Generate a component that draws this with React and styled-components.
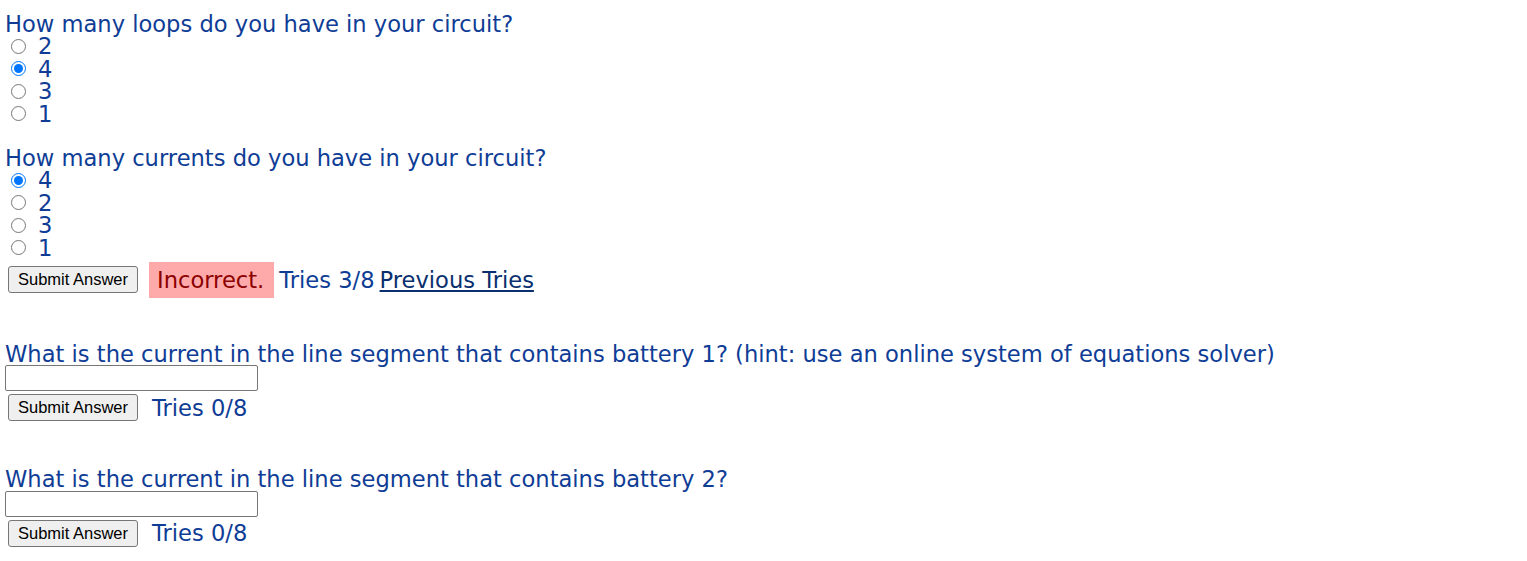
import React from 'react'
import styled, { createGlobalStyle } from "styled-components"

const GlobalStyle = createGlobalStyle`
  body {
    margin: 0;
    background: #ffffff;
    font-family: "DejaVu Sans", Verdana, sans-serif;
  }
`;

const questions = [
  { text: "How many loops do you have in your circuit?", options: ["2", "4", "3", "1"], checked: "4" },
  { text: "How many currents do you have in your circuit?", options: ["4", "2", "3", "1"], checked: "4" },
];

const App = () => {
  return (
    <Page>
      <GlobalStyle />
      <ChoiceBlock>
        <Question>{questions[0].text}</Question>
        {questions[0].options.map((o) => (
          <Option key={o}>
            <Radio type="radio" name="q1" defaultChecked={o === questions[0].checked} />
            <span>{o}</span>
          </Option>
        ))}
      </ChoiceBlock>
      <ChoiceBlock $gap>
        <Question>{questions[1].text}</Question>
        {questions[1].options.map((o) => (
          <Option key={o}>
            <Radio type="radio" name="q2" defaultChecked={o === questions[1].checked} />
            <span>{o}</span>
          </Option>
        ))}
        <SubmitRow>
          <SubmitButton>Submit Answer</SubmitButton>
          <Incorrect>Incorrect.</Incorrect>
          <Tries>Tries 3/8</Tries>
          <PrevLink href="#">Previous Tries</PrevLink>
        </SubmitRow>
      </ChoiceBlock>

      <FreeBlock $first>
        <Question>What is the current in the line segment that contains battery 1? (hint: use an online system of equations solver)</Question>
        <AnswerInput type="text" />
        <SubmitRow>
          <SubmitButton>Submit Answer</SubmitButton>
          <Tries $wide>Tries 0/8</Tries>
        </SubmitRow>
      </FreeBlock>

      <FreeBlock>
        <Question>What is the current in the line segment that contains battery 2?</Question>
        <AnswerInput type="text" />
        <SubmitRow>
          <SubmitButton>Submit Answer</SubmitButton>
          <Tries $wide>Tries 0/8</Tries>
        </SubmitRow>
      </FreeBlock>
    </Page>
  )
};

const Page = styled.main`
  padding: 13px 0 0 5px;
  color: #0f3d96;
  font-size: 22.6px;
  line-height: 22.4px;
`;

const ChoiceBlock = styled.section`
  display: flex;
  flex-direction: column;
  margin-top: ${(p) => (p.$gap ? "22px" : "0")};
`;

const Question = styled.div`
  white-space: nowrap;
`;

const Option = styled.label`
  display: flex;
  align-items: center;
  height: 22.4px;
  gap: 12px;
`;

const Radio = styled.input`
  width: 15px;
  height: 15px;
  margin: 0 0 0 6px;
  accent-color: #0075ff;
`;

const SubmitRow = styled.div`
  display: flex;
  align-items: center;
  margin-top: 3px;
`;

const SubmitButton = styled.button`
  font-family: "Liberation Sans", Arial, sans-serif;
  font-size: 16.5px;
  color: #000;
  height: 27px;
  width: 130px;
  margin-left: 3px;
  padding: 0;
  background: #efefef;
  border: 1px solid #767676;
  border-radius: 3px;
`;

const Incorrect = styled.span`
  margin-left: 11px;
  padding: 7px 10px 7px 8px;
  background: #ffaaaa;
  color: #8b0000;
  line-height: 22px;
`;

const Tries = styled.span`
  margin-left: ${(p) => (p.$wide ? "14px" : "5px")};
`;

const PrevLink = styled.a`
  margin-left: 5px;
  color: #0a2f6e;
  text-decoration: underline;
`;

const FreeBlock = styled.section`
  display: flex;
  flex-direction: column;
  align-items: flex-start;
  margin-top: ${(p) => (p.$first ? "45px" : "47px")};
`;

const AnswerInput = styled.input`
  width: 253px;
  height: 26px;
  box-sizing: border-box;
  margin: 0;
  border: 1px solid #767676;
  border-radius: 2px;
`;

export default App
